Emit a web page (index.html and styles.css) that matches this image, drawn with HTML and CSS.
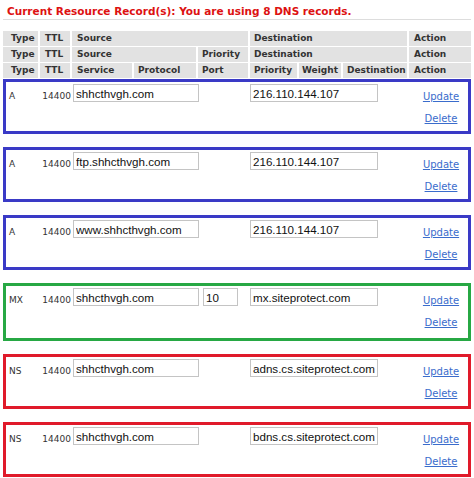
FILE: index.html
```html
<!DOCTYPE html>
<html>
<head>
<meta charset="utf-8">
<link rel="stylesheet" href="styles.css">
</head>
<body>
<div class="page">
  <h1 class="title">Current Resource Record(s): You are using 8 DNS records.</h1>

  <div class="hdr">
    <div class="h c-type">Type</div><div class="h c-ttl">TTL</div><div class="h c-svc span3">Source</div><div class="h span3">Destination</div><div class="h c-act">Action</div>
    <div class="h c-type">Type</div><div class="h c-ttl">TTL</div><div class="h c-svc span2">Source</div><div class="h">Priority</div><div class="h span3">Destination</div><div class="h c-act">Action</div>
    <div class="h c-type">Type</div><div class="h c-ttl">TTL</div><div class="h c-svc">Service</div><div class="h">Protocol</div><div class="h">Port</div><div class="h">Priority</div><div class="h c-wt">Weight</div><div class="h">Destination</div><div class="h c-act">Action</div>
  </div>

  <div class="rec blue">
    <div class="r-type">A</div><div class="r-ttl">14400</div>
    <input class="inp host" value="shhcthvgh.com"><div class="nopri"></div>
    <input class="inp dest" value="216.110.144.107">
    <div class="links"><a href="#" class="upd">Update</a><a href="#" class="del">Delete</a></div>
  </div>

  <div class="rec blue">
    <div class="r-type">A</div><div class="r-ttl">14400</div>
    <input class="inp host" value="ftp.shhcthvgh.com"><div class="nopri"></div>
    <input class="inp dest" value="216.110.144.107">
    <div class="links"><a href="#" class="upd">Update</a><a href="#" class="del">Delete</a></div>
  </div>

  <div class="rec blue">
    <div class="r-type">A</div><div class="r-ttl">14400</div>
    <input class="inp host" value="www.shhcthvgh.com"><div class="nopri"></div>
    <input class="inp dest" value="216.110.144.107">
    <div class="links"><a href="#" class="upd">Update</a><a href="#" class="del">Delete</a></div>
  </div>

  <div class="rec green">
    <div class="r-type">MX</div><div class="r-ttl">14400</div>
    <input class="inp host" value="shhcthvgh.com"><input class="inp pri" value="10">
    <input class="inp dest" value="mx.siteprotect.com">
    <div class="links"><a href="#" class="upd">Update</a><a href="#" class="del">Delete</a></div>
  </div>

  <div class="rec red">
    <div class="r-type">NS</div><div class="r-ttl">14400</div>
    <input class="inp host" value="shhcthvgh.com"><div class="nopri"></div>
    <input class="inp dest" value="adns.cs.siteprotect.com">
    <div class="links"><a href="#" class="upd">Update</a><a href="#" class="del">Delete</a></div>
  </div>

  <div class="rec red">
    <div class="r-type">NS</div><div class="r-ttl">14400</div>
    <input class="inp host" value="shhcthvgh.com"><div class="nopri"></div>
    <input class="inp dest" value="bdns.cs.siteprotect.com">
    <div class="links"><a href="#" class="upd">Update</a><a href="#" class="del">Delete</a></div>
  </div>
</div>
</body>
</html>
```

FILE: styles.css
```css
html, body {
  margin: 0;
  padding: 0;
  background: #ffffff;
}

.page {
  width: 468px;
  padding: 0 3px;
  font-family: "DejaVu Sans", Verdana, sans-serif;
}

.title {
  margin: 0;
  padding: 4px 0 0 4px;
  height: 15px;
  font-size: 10.5px;
  line-height: 14px;
  font-weight: bold;
  color: #dd1111;
  border-bottom: 1px solid #dddddd;
}

.hdr {
  margin-top: 11px;
  display: grid;
  grid-template-columns: 35px 30px 60px 62px 50px 47px 42px 64px 62px;
  grid-auto-rows: 15px;
  column-gap: 2px;
  row-gap: 1px;
}

.h {
  background: #e2e2e2;
  color: #333333;
  font-size: 9px;
  font-weight: bold;
  line-height: 15px;
  padding-left: 4px;
  white-space: nowrap;
  overflow: hidden;
}

.h.c-type { padding-left: 8px; }
.h.c-ttl { padding-left: 5px; }
.h.c-svc { padding-left: 5px; }
.h.c-wt { padding-left: 3px; }
.h.c-act { padding-left: 5px; }
.span2 { grid-column: span 2; }
.span3 { grid-column: span 3; }

.rec {
  margin-top: 1px;
  margin-bottom: 13px;
  height: 49px;
  border: 3px solid #3a3ac6;
  display: flex;
  align-items: flex-start;
}

.rec.green { border-color: #27a844; height: 52px; }
.rec.red { border-color: #e01a2a; }

.r-type {
  width: 27px;
  padding: 9px 0 0 3px;
  font-size: 9px;
  line-height: 11px;
  color: #333333;
}

.r-ttl {
  width: 35px;
  padding-top: 9px;
  text-align: right;
  font-size: 9px;
  line-height: 11px;
  color: #333333;
}

.inp {
  margin: 2px 0 0 0;
  box-sizing: border-box;
  height: 18px;
  border: 1px solid #c4c4c4;
  padding: 0 2px;
  font-family: "Liberation Sans", Arial, sans-serif;
  font-size: 11.6px;
  color: #111111;
  background: #ffffff;
  outline: none;
}

.host { width: 126px; margin-left: 2px; }
.pri { width: 35px; margin-left: 4px; }
.nopri { width: 39px; }
.dest { width: 128px; margin-left: 12px; }

.links {
  margin-left: 28px;
  width: 54px;
  padding: 9px 0 0 8px;
  display: flex;
  flex-direction: column;
  align-items: center;
  font-size: 10px;
  line-height: 12px;
}

.links a {
  color: #3a6ccc;
  text-decoration: underline;
}

.links .del { margin-top: 10px; }
```
